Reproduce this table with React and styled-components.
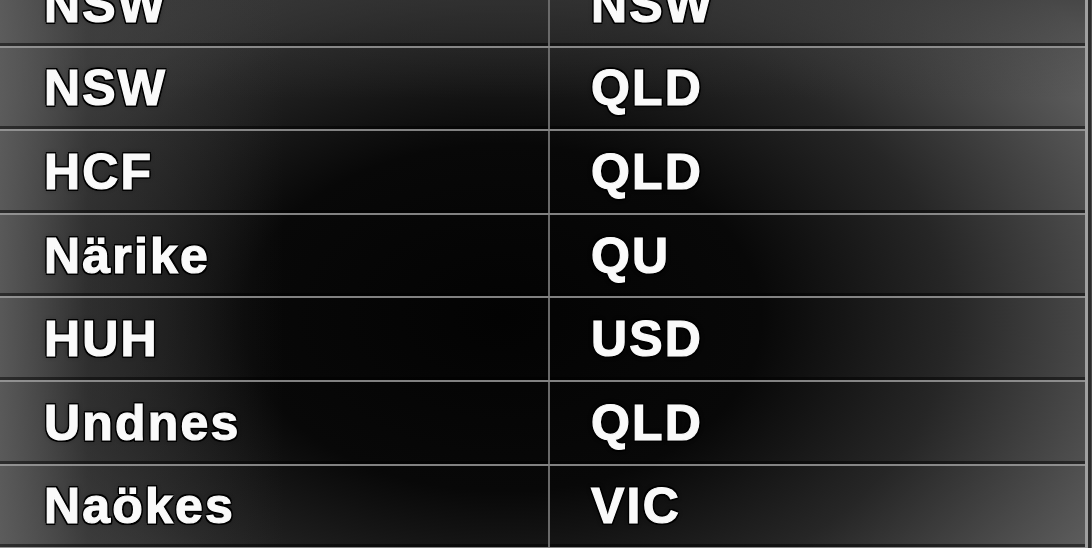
import styled, { createGlobalStyle } from "styled-components";

const GlobalStyle = createGlobalStyle`
  html, body {
    margin: 0;
    padding: 0;
    background: #000;
  }
  body {
    font-family: "Liberation Sans", Arial, sans-serif;
  }
`;

const Screen = styled.div`
  width: 1092px;
  height: 548px;
  overflow: hidden;
  background:
    linear-gradient(90deg, rgba(95, 95, 95, 0.85) 0%, rgba(60, 60, 60, 0.5) 8%, rgba(0, 0, 0, 0) 26%),
    linear-gradient(180deg, rgba(50, 50, 50, 0.6) 0%, rgba(0, 0, 0, 0) 18%),
    radial-gradient(
      ellipse 66% 88% at 46% 58%,
      #030303 0%,
      #080808 36%,
      #262626 62%,
      #4e4e4e 85%,
      #676767 100%
    );
`;

const Table = styled.div`
  margin-top: -36px;
  width: 1085px;
  border-right: 3px solid #a0a0a0;
  box-shadow: 3px 0 0 #2c2c2c;
`;

const Row = styled.div`
  display: grid;
  grid-template-columns: 548px 1fr;
  height: 83.6px;
  box-sizing: border-box;
  border-bottom: 2px solid rgba(160, 160, 160, 0.8);
  box-shadow: inset 0 -3px 0 rgba(0, 0, 0, 0.5);
`;

const Cell = styled.div`
  display: flex;
  align-items: center;
  padding-left: ${(p) => p.$pad}px;
  border-left: ${(p) => (p.$divider ? "2px solid #6a6a6a" : "none")};
  font-size: 50px;
  font-weight: 700;
  color: #fafafa;
  letter-spacing: 2.2px;
  -webkit-text-stroke: 1.2px #fafafa;
  text-shadow: -1.6px -1.6px 0 #000, 1.6px -1.6px 0 #000, -1.6px 1.6px 0 #000,
    1.6px 1.6px 0 #000, 0 2px 0 #000, 2px 0 0 #000, -2px 0 0 #000, 0 -2px 0 #000,
    0 0 5px rgba(0, 0, 0, 0.7);
`;

const rows = [
  ["NSW", "NSW"],
  ["NSW", "QLD"],
  ["HCF", "QLD"],
  ["Närike", "QU"],
  ["HUH", "USD"],
  ["Undnes", "QLD"],
  ["Naökes", "VIC"]
];

export default function App() {
  return (
    <>
      <GlobalStyle />
      <Screen>
        <Table>
          {rows.map(([left, right], i) => (
            <Row key={i}>
              <Cell $pad={44}>{left}</Cell>
              <Cell $pad={41} $divider>
                {right}
              </Cell>
            </Row>
          ))}
        </Table>
      </Screen>
    </>
  );
}
